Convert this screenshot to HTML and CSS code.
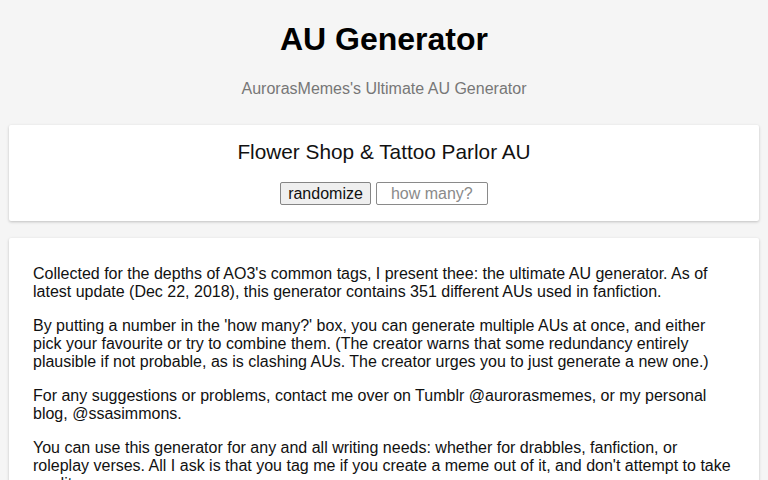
FILE: index.html
```html
<!DOCTYPE html>
<html lang="en">
<head>
<meta charset="utf-8">
<title>AU Generator</title>
<link rel="stylesheet" href="styles.css">
</head>
<body>
<header class="header">
  <h1 class="title">AU Generator</h1>
  <p class="subtitle">AurorasMemes's Ultimate AU Generator</p>
</header>
<main class="main">
  <section class="card generator">
    <h2 class="result">Flower Shop &amp; Tattoo Parlor AU</h2>
    <div class="controls">
      <button class="btn" type="button">randomize</button>
      <input class="count" type="text" placeholder="how many?">
    </div>
  </section>
  <section class="card about">
    <p>Collected for the depths of AO3's common tags, I present thee: the ultimate AU generator. As of latest update (Dec 22, 2018), this generator contains 351 different AUs used in fanfiction.</p>
    <p>By putting a number in the 'how many?' box, you can generate multiple AUs at once, and either pick your favourite or try to combine them. (The creator warns that some redundancy entirely plausible if not probable, as is clashing AUs. The creator urges you to just generate a new one.)</p>
    <p>For any suggestions or problems, contact me over on Tumblr @aurorasmemes, or my personal blog, @ssasimmons.</p>
    <p>You can use this generator for any and all writing needs: whether for drabbles, fanfiction, or roleplay verses. All I ask is that you tag me if you create a meme out of it, and don't attempt to take credit.</p>
  </section>
</main>
</body>
</html>
```

FILE: styles.css
```css
html, body {
  margin: 0;
  padding: 0;
}
body {
  background: #f5f5f5;
  font-family: "Liberation Sans", Arial, sans-serif;
  color: #111;
}
.header {
  text-align: center;
}
.title {
  margin: 21px 0 0;
  font-size: 32px;
  line-height: 37px;
  font-weight: bold;
  color: #000;
}
.subtitle {
  margin: 22px 0 0;
  font-size: 16px;
  line-height: 18px;
  color: #777;
}
.main {
  padding: 27px 9px 20px;
  display: flex;
  flex-direction: column;
  gap: 17px;
}
.card {
  background: #fff;
  border-radius: 2px;
  box-shadow: 0 1px 3px rgba(0, 0, 0, 0.22);
}
.generator {
  padding: 15px 24px 16px;
  text-align: center;
}
.result {
  margin: 0 0 18px;
  font-size: 20.8px;
  line-height: 24px;
  font-weight: normal;
  color: #111;
}
.controls {
  display: flex;
  justify-content: center;
  gap: 5px;
}
.btn {
  box-sizing: border-box;
  height: 23px;
  padding: 0 7px;
  font-family: "Liberation Sans", Arial, sans-serif;
  font-size: 16px;
  color: #111;
  background: #efefef;
  border: 1px solid #858585;
  border-radius: 2px;
}
.count {
  box-sizing: border-box;
  width: 112px;
  height: 23px;
  padding: 0 2px;
  font-family: "Liberation Sans", Arial, sans-serif;
  font-size: 16px;
  text-align: center;
  background: #fff;
  border: 1px solid #8a8a8a;
  border-radius: 2px;
}
.count::placeholder {
  color: #8a8a8a;
}
.about {
  padding: 11px 24px 12px;
}
.about p {
  margin: 16px 0;
  font-size: 16px;
  line-height: 18px;
}
```
